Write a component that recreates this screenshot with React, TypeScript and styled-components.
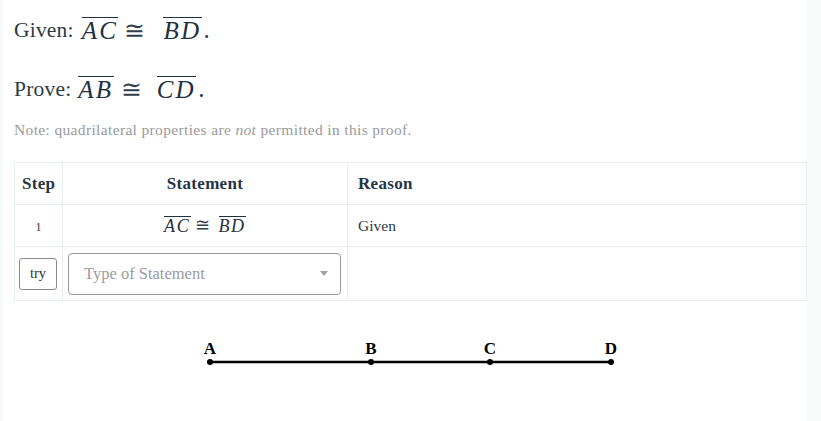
import { createGlobalStyle, styled } from "styled-components"

const Global = createGlobalStyle`
    html, body {
        margin: 0;
        padding: 0;
        background: #f9fafa;
    }
    body {
        font-family: "Liberation Serif", "Times New Roman", serif;
        color: #2d3a45;
    }
`

const Page = styled.main`
    width: 804px;
    margin-left: 3px;
    min-height: 421px;
    box-sizing: border-box;
    padding: 15px 0 0 11px;
    background: #fff;
`

const Claim = styled.p<{ $top?: number }>`
    margin: ${p => p.$top ?? 0}px 0 0;
    font-size: 21.5px;
    line-height: 30px;
    height: 30px;
    display: flex;
    align-items: center;
    letter-spacing: 0.2px;
`

const Math = styled.span<{ $size?: number; $lead?: number }>`
    display: inline-flex;
    align-items: center;
    margin-left: ${p => p.$lead ?? 0}px;
    font-size: ${p => p.$size ?? 25}px;
    color: #1f3040;
    letter-spacing: 0;
`

const Seg = styled.span`
    font-style: italic;
    letter-spacing: 0.09em;
    border-top: 1.5px solid #1f3040;
    line-height: 1.02;
    padding-right: 0.01em;
`

const Cong = styled.span<{ $l: number; $r: number }>`
    font-family: "DejaVu Serif", serif;
    font-size: 1em;
    line-height: 1;
    color: #33404c;
    margin: 0 ${p => p.$r}px 0 ${p => p.$l}px;
`

const Dot = styled.span`
    margin-left: 2px;
`

const Note = styled.p`
    margin: 16px 0 0;
    font-size: 15.5px;
    letter-spacing: 0.35px;
    line-height: 20px;
    color: #9a9a9a;
`

const Table = styled.table`
    margin-top: 22px;
    width: 793px;
    table-layout: fixed;
    border-collapse: collapse;
    border: 1px solid #e8eef0;
    > tbody > tr > td, > thead > tr > th {
        border: 1px solid #e8eef0;
        padding: 0 10px;
    }
`

const Col = styled.col<{ $w?: number }>`
    width: ${p => (p.$w ? `${p.$w}px` : "auto")};
`

const Head = styled.th<{ $align?: string }>`
    height: 41px;
    text-align: ${p => p.$align ?? "left"};
    font-size: 17px;
    letter-spacing: 0.3px;
    font-weight: 700;
    color: #263545;
    && { padding: 0 ${p => (p.$align === "left" ? "7px" : "10px")}; }
`

const Cell = styled.td<{ $align?: string; $h?: number; $pad?: number }>`
    height: ${p => p.$h ?? 41}px;
    text-align: ${p => p.$align ?? "left"};
    font-size: 15.5px;
    color: #2d3a45;
    && { padding: 0 ${p => p.$pad ?? 10}px; }
`

const StepNo = styled.span`
    font-size: 12px;
`

const TryButton = styled.button`
    display: block;
    width: 38px;
    height: 32px;
    padding: 0;
    background: #fff;
    border: 1px solid #8a8a8a;
    border-radius: 3px;
    font-family: "Liberation Serif", serif;
    font-size: 14.5px;
    color: #333;
`

const Select = styled.div`
    width: 273px;
    height: 42px;
    box-sizing: border-box;
    border: 1px solid #999;
    border-radius: 4px;
    display: flex;
    align-items: center;
    justify-content: space-between;
    padding: 0 12px 0 15px;
    font-size: 16.5px;
    color: #9c9c9c;
    &::after {
        content: "";
        border-left: 4px solid transparent;
        border-right: 4px solid transparent;
        border-top: 5px solid #a0a0a0;
    }
`

const Diagram = styled.svg`
    display: block;
    width: 793px;
    height: 120px;
`

const points = [
    { label: "A", x: 196 },
    { label: "B", x: 357 },
    { label: "C", x: 476 },
    { label: "D", x: 597 },
]

function Congruence({ a, b, size, lead, l, r, dot }: {
    a: string; b: string; size?: number; lead?: number; l: number; r: number; dot?: boolean
}) {
    return (
        <Math $size={size} $lead={lead}>
            <Seg>{a}</Seg>
            <Cong $l={l} $r={r}>≅</Cong>
            <Seg>{b}</Seg>
            {dot && <Dot>.</Dot>}
        </Math>
    )
}

export default function App() {
    return (
        <Page>
            <Global />
            <Claim>
                Given:
                <Congruence a="AC" b="BD" lead={8} l={6} r={18} dot />
            </Claim>
            <Claim $top={29}>
                Prove:
                <Congruence a="AB" b="CD" lead={7} l={7} r={15} dot />
            </Claim>
            <Note>
                Note: quadrilateral properties are <i>not</i> permitted in this proof.
            </Note>
            <Table>
                <colgroup>
                    <Col $w={48} />
                    <Col $w={285} />
                    <Col />
                </colgroup>
                <thead>
                    <tr>
                        <Head $align="left">Step</Head>
                        <Head $align="center">Statement</Head>
                        <Head>Reason</Head>
                    </tr>
                </thead>
                <tbody>
                    <tr>
                        <Cell $align="center"><StepNo>1</StepNo></Cell>
                        <Cell $align="center">
                            <Congruence a="AC" b="BD" size={18} l={4} r={9} />
                        </Cell>
                        <Cell>Given</Cell>
                    </tr>
                    <tr>
                        <Cell $h={53} $pad={4}>
                            <TryButton>try</TryButton>
                        </Cell>
                        <Cell $h={53} $pad={5}>
                            <Select>Type of Statement</Select>
                        </Cell>
                        <Cell $h={53} />
                    </tr>
                </tbody>
            </Table>
            <Diagram viewBox="0 0 793 120">
                <line x1={196} y1={61} x2={597} y2={61} stroke="#000" strokeWidth={2.4} />
                {points.map(p => (
                    <g key={p.label}>
                        <circle cx={p.x} cy={61} r={3} fill="#000" />
                        <text
                            x={p.x}
                            y={53}
                            textAnchor="middle"
                            fontFamily="Liberation Serif, serif"
                            fontWeight={700}
                            fontSize={17}
                            fill="#000"
                        >
                            {p.label}
                        </text>
                    </g>
                ))}
            </Diagram>
        </Page>
    )
}
